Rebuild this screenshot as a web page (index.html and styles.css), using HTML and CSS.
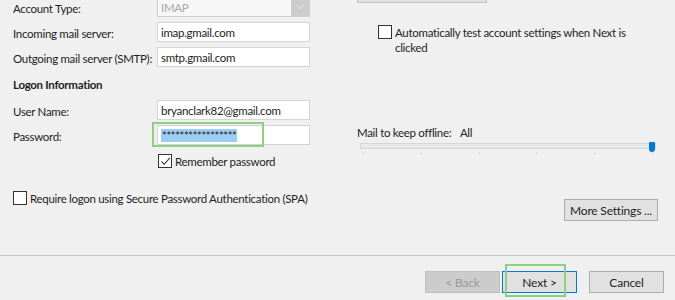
FILE: index.html
```html
<!DOCTYPE html>
<html lang="en">

<head>
    <meta charset="UTF-8">
    <title>Account Settings</title>
    <link rel="stylesheet" href="styles.css">
</head>

<body>
    <div class="dialog">
        <div class="content">
            <div class="left">
                <div class="row first">
                    <label>Account Type:</label>
                    <div class="select">
                        <span>IMAP</span>
                        <span class="arrow">
                            <svg width="9" height="6" viewBox="0 0 9 6"><path d="M1 1 L4.5 4.5 L8 1" fill="none" stroke="#e8e8e8" stroke-width="1"/></svg>
                        </span>
                    </div>
                </div>
                <div class="row">
                    <label>Incoming mail server:</label>
                    <div class="input">imap.gmail.com</div>
                </div>
                <div class="row">
                    <label>Outgoing mail server (SMTP):</label>
                    <div class="input">smtp.gmail.com</div>
                </div>

                <h3>Logon Information</h3>

                <div class="row user">
                    <label>User Name:</label>
                    <div class="input">bryanclark82@gmail.com</div>
                </div>
                <div class="row">
                    <label>Password:</label>
                    <div class="input pass"><span class="sel">*****************</span></div>
                    <div class="mark pass-mark"></div>
                </div>
                <div class="check remember">
                    <span class="box">
                        <svg width="11" height="11" viewBox="0 0 11 11"><path d="M1.5 5.5 L4.2 8.3 L9.8 1.8" fill="none" stroke="#333" stroke-width="1.1"/></svg>
                    </span>
                    Remember password
                </div>
                <div class="check spa">
                    <span class="box"></span>
                    Require logon using Secure Password Authentication (SPA)
                </div>
            </div>

            <div class="right">
                <div class="test-btn"></div>
                <div class="check auto">
                    <span class="box"></span>
                    <span>Automatically test account settings when Next is clicked</span>
                </div>
                <div class="offline">
                    <span>Mail to keep offline:</span>
                    <span class="val">All</span>
                </div>
                <div class="slider">
                    <div class="track"></div>
                    <div class="thumb"></div>
                    <div class="ticks">
                        <i></i><i></i><i></i><i></i><i></i><i></i>
                    </div>
                </div>
                <div class="more">
                    <button class="btn">More Settings ...</button>
                </div>
            </div>
        </div>

        <div class="footer">
            <button class="btn disabled">&lt; Back</button>
            <button class="btn next">Next &gt;<span class="mark next-mark"></span></button>
            <button class="btn cancel">Cancel</button>
        </div>
    </div>
</body>

</html>
```

FILE: styles.css
```css
body {
    margin: 0;
    background: #f0f0f0;
    font-family: "Segoe UI", Lato, sans-serif;
    font-size: 11.5px;
    letter-spacing: -0.3px;
    color: #1e1e1e;
    overflow: hidden;
}

.dialog {
    width: 675px;
    height: 300px;
}

.content {
    display: flex;
    height: 255px;
}

.left {
    width: 344px;
    padding-left: 13px;
    white-space: nowrap;
}

.row {
    display: flex;
    align-items: center;
    height: 20px;
    margin-bottom: 5px;
    position: relative;
}

.row label {
    padding-top: 2px;
}

.row.first {
    margin-top: -3px;
}

.row label {
    width: 144px;
}

.input,
.select {
    box-sizing: border-box;
    width: 153px;
    height: 20px;
    border: 1px solid #d4d4d4;
    background: #fff;
    padding-left: 3px;
    display: flex;
    align-items: center;
}

.select {
    background: #f7f7f7;
    color: #a8a8a8;
    border-color: #d0d0d0;
    justify-content: space-between;
    padding-right: 0;
}

.select .arrow {
    width: 18px;
    height: 18px;
    background: #cccccc;
    display: flex;
    align-items: center;
    justify-content: center;
}

h3 {
    font-size: 11.5px;
    font-weight: bold;
    margin: 10px 0 0;
    height: 16px;
    line-height: 16px;
}

.row.user {
    margin-top: 7px;
}

.sel {
    background: #9ccdf3;
    line-height: 13px;
    font-size: 11px;
    letter-spacing: -0.3px;
    padding: 0 1px;
}

.mark {
    position: absolute;
    border: 2px solid #8fcf84;
    box-sizing: border-box;
}

.pass-mark {
    left: 139px;
    top: -3px;
    width: 112px;
    height: 25px;
}

.check {
    display: flex;
    align-items: flex-start;
    line-height: 15px;
}

.check .box {
    box-sizing: border-box;
    width: 14px;
    height: 14px;
    border: 1px solid #333;
    background: #fff;
    margin-right: 3px;
    flex: none;
    display: flex;
    align-items: center;
    justify-content: center;
}

.remember {
    margin: 9px 0 0 145px;
}

.spa {
    margin-top: 22px;
}

.right {
    flex: 1;
}

.test-btn {
    width: 130px;
    height: 21px;
    margin-top: -18px;
    box-sizing: border-box;
    border: 1px solid #c4c4c4;
    background: #e1e1e1;
}

.check.auto {
    margin: 22px 0 0 21px;
    width: 250px;
}

.offline {
    margin-top: 70px;
    line-height: 15px;
}

.offline .val {
    margin-left: 6px;
}

.slider {
    position: relative;
    width: 296px;
    height: 16px;
    margin: 2px 0 0 3px;
}

.track {
    position: absolute;
    top: 1px;
    left: 0;
    right: 0;
    height: 4px;
    background: #e7eaea;
    border: 1px solid #d6d6d6;
}

.thumb {
    position: absolute;
    right: 1px;
    top: 0;
    width: 6px;
    height: 10px;
    background: #0078d7;
    border-radius: 1px 1px 3px 3px;
}

.ticks {
    position: absolute;
    top: 11px;
    left: 3px;
    right: 3px;
    display: flex;
    justify-content: space-between;
}

.ticks i {
    width: 1px;
    height: 1px;
    background: #b0b0b0;
}

.more {
    display: flex;
    justify-content: flex-end;
    margin: 41px 17px 0 0;
}

.btn {
    box-sizing: border-box;
    font-family: inherit;
    font-size: 12px;
    letter-spacing: -0.2px;
    color: #1e1e1e;
    background: #e1e1e1;
    border: 1px solid #adadad;
    height: 22px;
    padding: 0;
}

.more .btn {
    width: 94px;
}

.footer {
    border-top: 1px solid #c9c9c9;
    display: flex;
    justify-content: flex-end;
    padding: 15px 11px 0 0;
}

.footer .btn {
    width: 75px;
}

.btn.disabled {
    background: #cccccc;
    border-color: #bfbfbf;
    color: #9a9a9a;
}

.btn.next {
    margin-left: 2px;
    border-color: #0078d7;
    position: relative;
}

.next-mark {
    left: 2px;
    top: -8px;
    width: 61px;
    height: 33px;
}

.btn.cancel {
    margin-left: 12px;
}
```
